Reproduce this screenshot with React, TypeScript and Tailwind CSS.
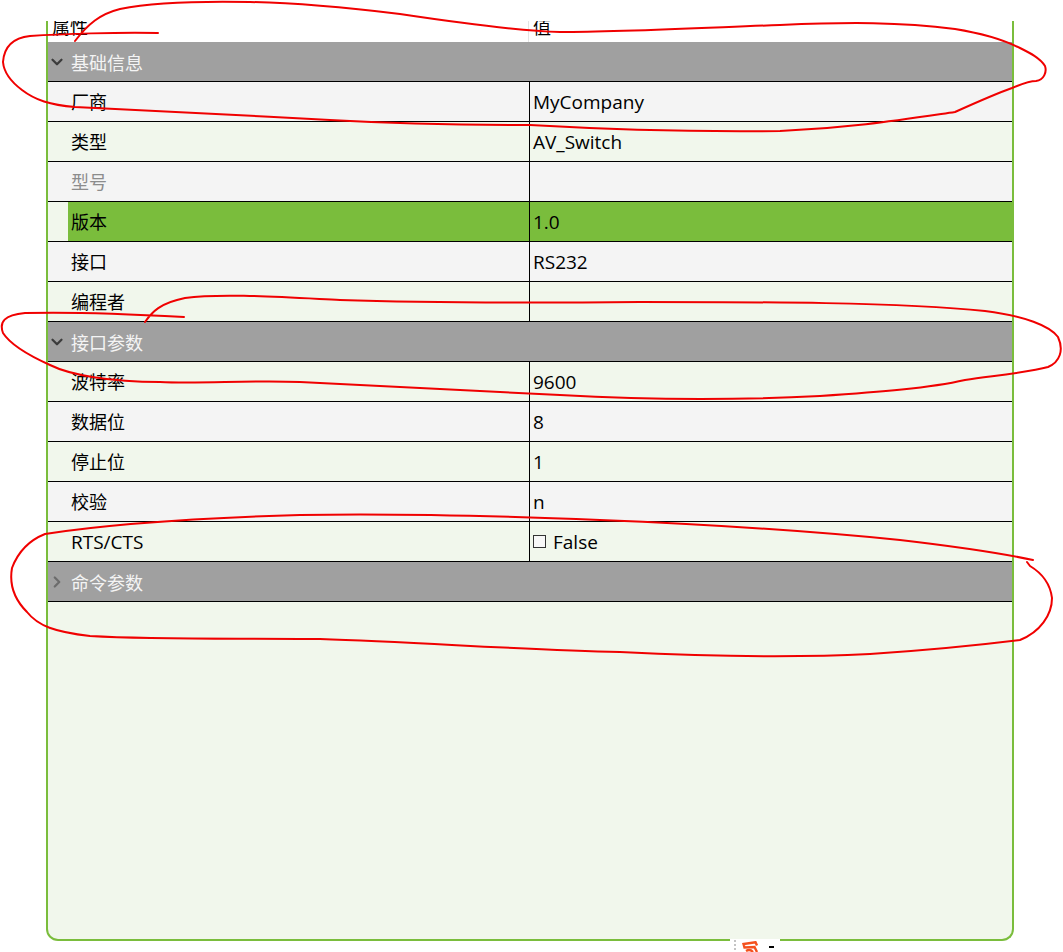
import type { ReactNode } from "react";
import { ChevronDown, ChevronRight } from "lucide-react";

function Group({ title, open }: { title: string; open: boolean }) {
  return (
    <div className="flex h-10 items-center border-b border-black bg-[#a0a0a0] text-[#f4f4f4]">
      <div className="flex w-5 shrink-0 justify-center pr-0.5">
        {open ? (
          <ChevronDown size={18} strokeWidth={3} className="text-[#3c3c3c]" />
        ) : (
          <ChevronRight size={18} strokeWidth={3} className="text-[#6c6c6c]" />
        )}
      </div>
      <span className="pl-[3px] pt-0.5">{title}</span>
    </div>
  );
}

function Row({
  name,
  value,
  alt,
  selected,
  muted,
}: {
  name: ReactNode;
  value?: ReactNode;
  alt?: boolean;
  selected?: boolean;
  muted?: boolean;
}) {
  const bg = selected ? "bg-[#7abd3c]" : alt ? "bg-[#f1f7ec]" : "bg-[#f4f4f4]";
  return (
    <div className={`flex h-10 border-b border-black ${selected ? "bg-[#f1f7ec]" : bg}`}>
      <div
        className={`ml-5 flex w-[462px] shrink-0 items-center border-r border-black pl-[3px] pt-px ${bg} ${
          muted ? "text-[#8c8c8c]" : "text-black"
        }`}
      >
        {name}
      </div>
      <div className={`flex flex-1 items-center pl-[3px] text-[19px] text-black ${bg}`}>{value}</div>
    </div>
  );
}

function Scribbles() {
  return (
    <svg
      className="pointer-events-none absolute left-0 top-0"
      width="1063"
      height="952"
      viewBox="0 0 1063 952"
      fill="none"
      stroke="#f00000"
      strokeWidth="2"
      strokeLinecap="round"
      strokeLinejoin="round"
    >
      <path d="M158 33C120 32 60 34 30 36C12 38 4 48 3 62C4 74 14 84 22 90C35 100 50 105 75 107C140 110 240 115 330 120C400 124 470 125 530 125C600 129 700 132 780 131C850 128 900 120 955 112C975 103 995 94 1012 88C1024 83 1030 81 1036 81C1044 80 1047 72 1045 66C1040 58 1030 53 1020 48C1000 38 980 33 955 29C900 22 850 22 780 25C700 28 620 32 560 32C520 31 460 23 400 14C350 8 300 3 250 2C200 1 150 3 120 9C100 14 88 24 75 41" />
      <path d="M145 322C152 312 160 303 185 298C220 293 280 297 340 300C430 303 530 303 640 302C760 302 900 302 985 311C1025 316 1050 326 1058 337C1064 350 1060 362 1048 367C1030 372 1000 375 965 380C930 388 880 392 820 396C740 400 650 400 560 395C480 391 380 386 300 382C250 380 200 384 160 382C110 382 70 375 50 365C30 356 10 344 3 333C-1 322 4 315 25 313C60 312 130 314 184 317" />
      <path d="M1033 560C1000 553 960 547 900 540C820 532 700 524 600 520C500 516 400 513 300 515C200 518 110 524 45 534C30 540 18 552 12 568C9 585 15 600 27 612C38 626 55 632 90 636C160 640 240 638 320 639C420 642 520 650 620 652C700 656 790 658 870 654C930 650 980 645 1020 640C1040 632 1052 615 1052 598C1050 582 1040 572 1030 566L1027 562" />
    </svg>
  );
}

export default function App() {
  return (
    <div
      className="relative h-[952px] w-[1063px] overflow-hidden bg-white pl-[46px] pt-[21px] text-[18px] leading-6"
      style={{ fontFamily: '"Open Sans", "Noto Sans CJK SC", sans-serif' }}
    >
      <div className="h-[920px] w-[968px] overflow-hidden rounded-b-xl border-x-2 border-b-2 border-[#7abd3c] bg-[#f1f7ec]">
        <div className="flex h-[21px] items-start overflow-hidden bg-white leading-none text-black">
          <div className="h-[21px] w-[481px] shrink-0 border-r border-[#e4e4e4] pl-1">
            <div className="-mt-[3px]">属性</div>
          </div>
          <div className="-mt-[3px] pl-[4px]">值</div>
        </div>
        <Group title="基础信息" open />
        <Row name="厂商" value="MyCompany" />
        <Row name="类型" value="AV_Switch" alt />
        <Row name="型号" muted />
        <Row name="版本" value="1.0" selected />
        <Row name="接口" value="RS232" />
        <Row name="编程者" alt />
        <Group title="接口参数" open />
        <Row name="波特率" value="9600" alt />
        <Row name="数据位" value="8" />
        <Row name="停止位" value="1" alt />
        <Row name="校验" value="n" />
        <Row
          name={<span className="text-[19px]">RTS/CTS</span>}
          value={
            <>
              <span className="mr-[7px] h-[13px] w-[13px] border border-[#333333] bg-[#f8f8f8]" />
              False
            </>
          }
          alt
        />
        <Group title="命令参数" open={false} />
      </div>
      <Scribbles />
      <div className="absolute left-[730px] top-[939px] flex h-[13px] w-[50px] items-start bg-white">
        <div className="ml-[4px] mt-px flex flex-col gap-[2px]">
          <div className="h-0.5 w-0.5 bg-[#c4c4c4]" />
          <div className="h-0.5 w-0.5 bg-[#c4c4c4]" />
          <div className="h-0.5 w-0.5 bg-[#c4c4c4]" />
        </div>
        <svg width="18" height="11" viewBox="0 0 18 11" className="ml-[6px] mt-[2px]" fill="none" stroke="#f4511e" strokeWidth="2.4">
          <path d="M15 4.500L13.500 1.200L1.500 3L2.500 6.500L12.500 6L15 11" />
          <path d="M4 10C6 8.800 9 8.800 11 11" />
        </svg>
        <div className="ml-[9px] mt-[7px] h-0.5 w-[5px] bg-black" />
      </div>
    </div>
  );
}
